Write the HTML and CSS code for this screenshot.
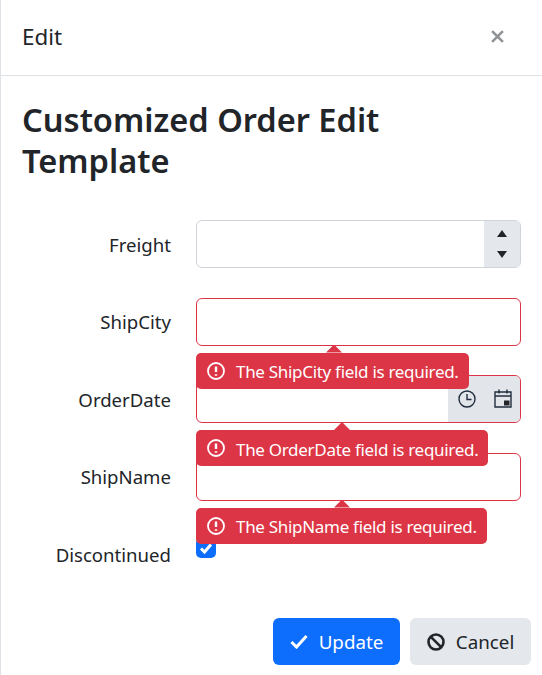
FILE: index.html
```html
<html>
<head>
  <link rel="stylesheet" href="styles.css">
</head>

<body>
  <div class="dialog">
    <div class="dialog-header">
      <span class="dialog-title">Edit</span>
      <svg class="close-icon" viewBox="0 0 12 12"><path d="M1 1L11 11M11 1L1 11"/></svg>
    </div>

    <div class="dialog-body">
      <h3 class="template-title">Customized Order Edit Template</h3>

      <div class="form-row">
        <label class="form-label">Freight</label>
        <div class="input-wrap">
          <div class="input-box">
            <div class="spinner">
              <svg viewBox="0 0 10 7"><path d="M5 0L10 7H0Z"/></svg>
              <svg viewBox="0 0 10 7"><path d="M0 0H10L5 7Z"/></svg>
            </div>
          </div>
        </div>
      </div>

      <div class="form-row">
        <label class="form-label">ShipCity</label>
        <div class="input-wrap">
          <div class="input-box invalid"></div>
          <div class="error-tip tip-city">
            <svg class="error-icon" viewBox="0 0 18 18"><circle cx="9" cy="9" r="8"/><path d="M9 4.5V10M9 12.2V13.8"/></svg>
            <span>The ShipCity field is required.</span>
          </div>
        </div>
      </div>

      <div class="form-row">
        <label class="form-label">OrderDate</label>
        <div class="input-wrap">
          <div class="input-box invalid">
            <div class="date-buttons">
              <svg class="clock-icon" viewBox="0 0 18 18"><circle cx="9" cy="9" r="8"/><path d="M9 4V9.5H13.5"/></svg>
              <svg class="calendar-icon" viewBox="0 0 18 19"><path d="M1 3H17V18H1ZM1 7H17M5 0.5V4.5M13 0.5V4.5"/><rect x="10" y="11.5" width="5.5" height="5"/></svg>
            </div>
          </div>
          <div class="error-tip tip-date">
            <svg class="error-icon" viewBox="0 0 18 18"><circle cx="9" cy="9" r="8"/><path d="M9 4.5V10M9 12.2V13.8"/></svg>
            <span>The OrderDate field is required.</span>
          </div>
        </div>
      </div>

      <div class="form-row">
        <label class="form-label">ShipName</label>
        <div class="input-wrap">
          <div class="input-box invalid"></div>
          <div class="error-tip tip-name">
            <svg class="error-icon" viewBox="0 0 18 18"><circle cx="9" cy="9" r="8"/><path d="M9 4.5V10M9 12.2V13.8"/></svg>
            <span>The ShipName field is required.</span>
          </div>
        </div>
      </div>

      <div class="form-row check-row">
        <label class="form-label">Discontinued</label>
        <div class="check-box">
          <svg viewBox="0 0 20 20"><path d="M5 10.5L8.5 14L15 6.5"/></svg>
        </div>
      </div>
    </div>

    <div class="dialog-footer">
      <button class="btn btn-update">
        <svg viewBox="0 0 18 15"><path d="M1.5 8L6.5 13L16.5 2"/></svg>
        Update
      </button>
      <button class="btn btn-cancel">
        <svg viewBox="0 0 18 18"><circle cx="9" cy="9" r="7.5"/><path d="M3.8 3.8L14.2 14.2"/></svg>
        Cancel
      </button>
    </div>
  </div>
</body>
</html>
```

FILE: styles.css
```css
html, body {
  margin: 0;
  height: 100%;
}
body {
  background-color: white;
  color: #212529;
  font-family: "Noto Sans", "Open Sans", sans-serif;
  font-size: 18.6px;
  overflow: hidden;
}
.dialog {
  box-sizing: border-box;
  height: 675px;
  border-left: 1px solid #dee2e6;
  display: flex;
  flex-direction: column;
}
.dialog-header {
  box-sizing: border-box;
  height: 76px;
  border-bottom: 1px solid #dee2e6;
  padding: 0 38px 3px 21px;
  display: flex;
  align-items: center;
  justify-content: space-between;
}
.dialog-title {
  font-size: 22.4px;
}
.close-icon {
  width: 13px;
  height: 13px;
  fill: none;
  stroke: #909396;
  stroke-width: 2.4;
}
.dialog-body {
  padding: 0 21px;
  flex: 1;
}
.template-title {
  font-size: 32.6px;
  font-weight: 600;
  line-height: 41px;
  margin: 23px 0 39px 0;
  max-width: 460px;
}
.form-row {
  display: flex;
  height: 48px;
  margin-bottom: 29.5px;
  align-items: center;
}
.form-label {
  width: 149px;
  margin-right: 25px;
  text-align: right;
  flex-shrink: 0;
}
.input-wrap {
  position: relative;
  flex: 1;
  height: 100%;
}
.input-box {
  box-sizing: border-box;
  height: 100%;
  border: 1px solid #ced4da;
  border-radius: 6px;
  display: flex;
  justify-content: flex-end;
  overflow: hidden;
}
.input-box.invalid {
  border-color: #dc3545;
}
.spinner {
  width: 36px;
  background-color: #e4e7eb;
  display: flex;
  flex-direction: column;
  align-items: center;
  justify-content: center;
  gap: 14px;
}
.spinner svg {
  width: 10px;
  height: 7px;
  fill: #212529;
}
.date-buttons {
  width: 72px;
  background-color: #e2e5ea;
  display: flex;
  align-items: center;
  gap: 18px;
  padding: 0 8px 1px 10px;
  box-sizing: border-box;
}
.clock-icon, .calendar-icon {
  flex-shrink: 0;
  fill: none;
  stroke: #212d3f;
  stroke-width: 1.4;
}
.clock-icon {
  width: 18px;
  height: 18px;
}
.calendar-icon {
  width: 18px;
  height: 19px;
  margin-top: -1px;
}
.calendar-icon rect {
  fill: #212529;
  stroke: none;
}
.error-tip {
  position: absolute;
  left: 0;
  top: 55px;
  height: 36px;
  box-sizing: border-box;
  background-color: #dc3545;
  border-radius: 5px;
  color: white;
  font-size: 17px;
  letter-spacing: -0.3px;
  display: flex;
  align-items: center;
  padding: 0 10px 0 11px;
  white-space: nowrap;
  gap: 11px;
  z-index: 2;
}
.error-tip span {
  padding-top: 2px;
}
.error-tip::before {
  content: "";
  position: absolute;
  top: -8px;
  width: 16px;
  height: 16px;
  margin-left: -8px;
  background-color: #dc3545;
  clip-path: polygon(50% 0, 100% 50%, 0 50%);
}
.tip-city::before { left: 138px; }
.tip-date::before { left: 146px; }
.tip-name::before { left: 146px; }
.error-icon {
  width: 18px;
  height: 18px;
  flex-shrink: 0;
  fill: none;
  stroke: white;
  stroke-width: 1.8;
}
.error-icon path {
  stroke-width: 2.4;
}
.check-box {
  width: 20px;
  height: 20px;
  border-radius: 5px;
  background-color: #0d6efd;
  margin-top: -13px;
}
.check-box svg {
  display: block;
  fill: none;
  stroke: white;
  stroke-width: 3;
}
.dialog-footer {
  display: flex;
  justify-content: flex-end;
  gap: 10px;
  padding: 0 11px 10px 0;
}
.btn {
  height: 47px;
  border: none;
  border-radius: 6px;
  font-family: inherit;
  font-size: 18.8px;
  display: flex;
  align-items: center;
  gap: 11px;
}
.btn svg {
  fill: none;
  stroke: currentColor;
}
.btn-update {
  width: 127px;
  justify-content: center;
  background-color: #0d6efd;
  color: white;
}
.btn-update svg {
  width: 18px;
  height: 15px;
  stroke-width: 3;
}
.btn-cancel {
  width: 121px;
  justify-content: center;
  background-color: #e4e7eb;
  color: #212529;
}
.btn-cancel svg {
  width: 18px;
  height: 18px;
  stroke-width: 2.6;
}
```
